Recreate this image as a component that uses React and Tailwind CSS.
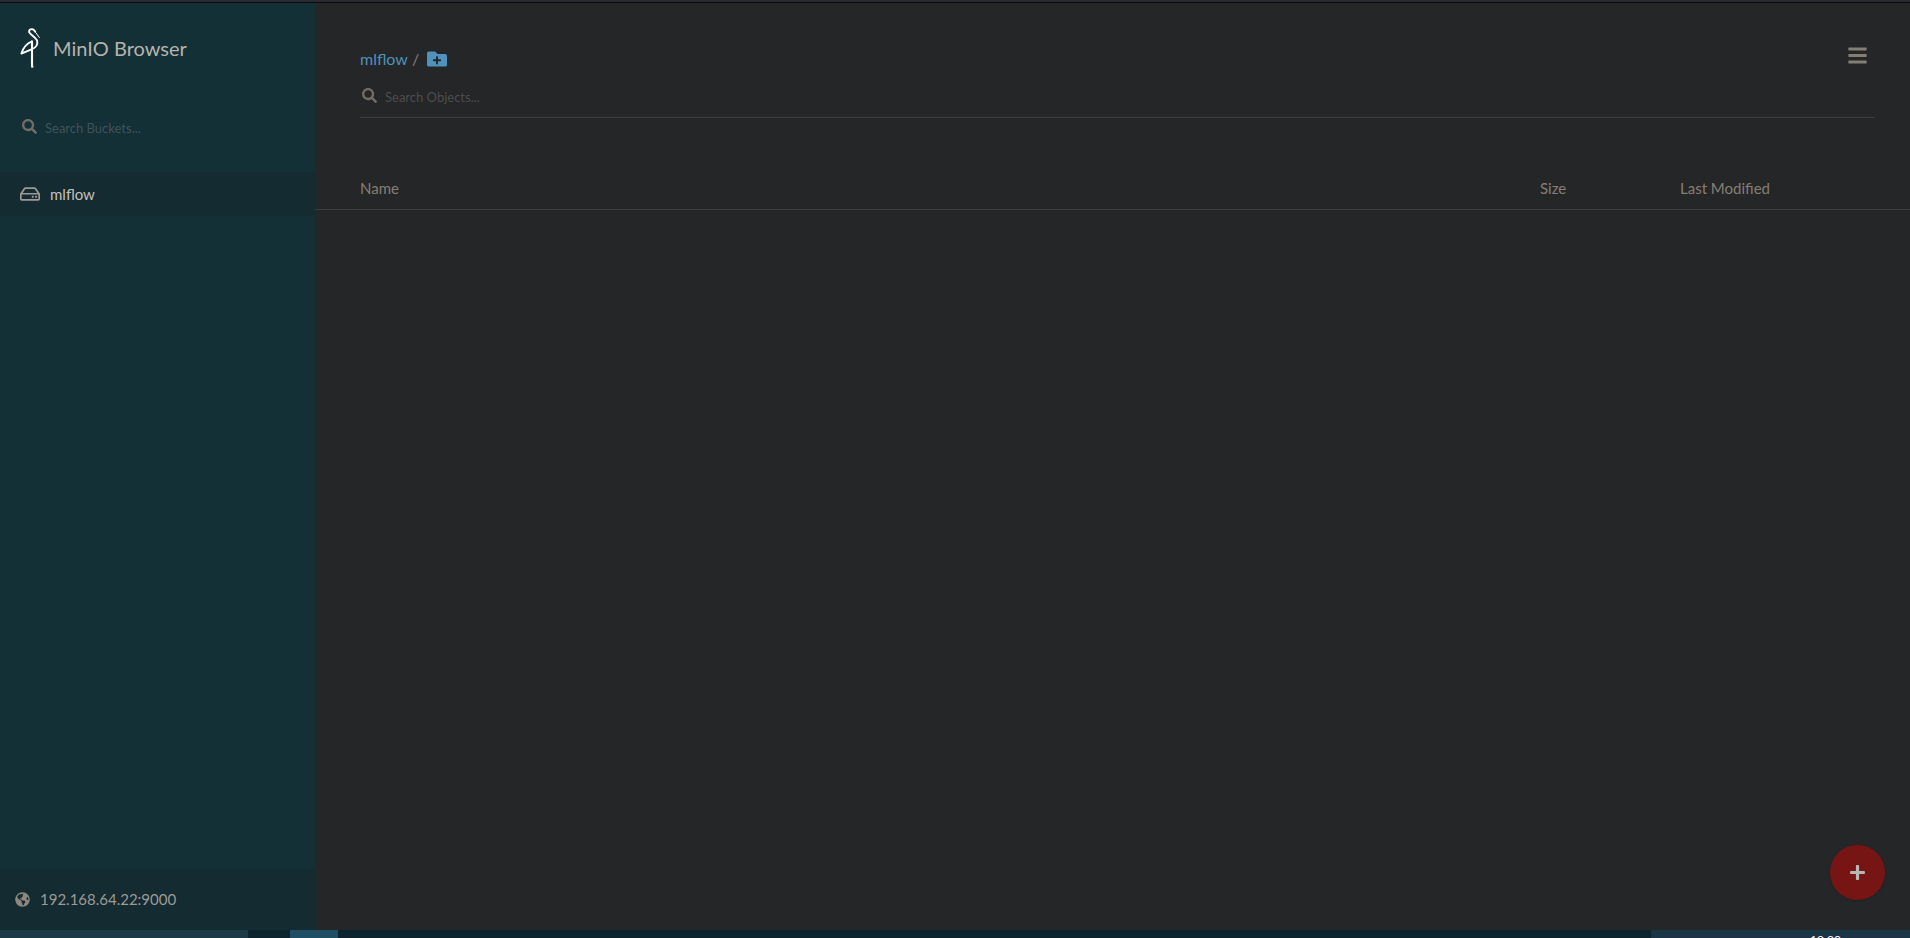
import React, { useState } from 'react';
import { FaBars, FaFolderPlus, FaGlobeAmericas, FaPlus, FaRegHdd, FaSearch } from 'react-icons/fa';

const buckets = ['mlflow'];

const Logo = () => (
  <svg viewBox="0 0 20 40" className="w-5 h-10" fill="none" stroke="#fff" aria-hidden="true">
    <path d="M12 13.4 C6.5 15.5 3 20.5 1.4 25.6 L12 21.2 C15.4 19.8 17.8 16.8 17.2 13 C16.4 9.6 10.4 6.6 9.2 4.4 C8.6 2.4 10.2 1 12 1.1 C14 1.2 14.8 2.8 15.4 4.2" strokeWidth="1.9" strokeLinejoin="round" />
    <path d="M12 12.4 L12 37.6 L12.6 39.6" strokeWidth="2.1" />
    <path d="M15 3.6 L19.6 9.8" strokeWidth="1" />
  </svg>
);

const SearchBox = ({ id, label, value, onChange }) => (
  <div className="flex items-center gap-2">
    <label htmlFor={id} aria-label={label} className="pb-1">
      <FaSearch className="size-[15px] text-[#716d66]" />
    </label>
    <input
      id={id}
      type="text"
      value={value}
      onChange={(e) => onChange(e.target.value)}
      placeholder={`${label}...`}
      className="flex-1 min-w-0 h-6 bg-transparent text-[13px] text-[#b0aca4] placeholder:text-[#b0aca4]/30 outline-none"
    />
  </div>
);

const Sidebar = () => {
  const [filter, setFilter] = useState('');
  const visible = buckets.filter(name => name.includes(filter));

  return (
    <aside className="w-[315px] shrink-0 flex flex-col bg-[#133037]">
      <div className="flex items-center gap-[13px] px-5 pt-[25px]">
        <Logo />
        <h1 className="text-xl text-[#b7b3ac]">MinIO Browser</h1>
      </div>
      <div className="px-[22px] pt-12 pb-8">
        <SearchBox id="bucket-search" label="Search Buckets" value={filter} onChange={setFilter} />
      </div>
      <ul>
        {visible.map(name => (
          <li key={name}>
            <a href={`#${name}`} className="flex items-center gap-2.5 h-11 px-5 bg-[#142b32] text-[15px] text-[#c4c1bb]">
              <FaRegHdd className="size-5 text-[#9c9a95]" />
              {name}
            </a>
          </li>
        ))}
      </ul>
      <div className="mt-auto flex items-center gap-2.5 h-[61px] px-[15px] bg-[#142b32] text-[15px] text-[#9c9a95]">
        <FaGlobeAmericas className="size-[15px] text-[#8f887d]" />
        192.168.64.22:9000
      </div>
    </aside>
  );
};

const ObjectList = () => (
  <table className="w-full table-fixed text-left text-[15px] text-[#857e73]">
    <thead>
      <tr className="h-[42px] border-b border-[#3b3d3e]">
        <th className="pl-[45px] font-normal">Name</th>
        <th className="w-[140px] font-normal">Size</th>
        <th className="w-[230px] font-normal">Last Modified</th>
      </tr>
    </thead>
    <tbody />
  </table>
);

const Taskbar = () => (
  <footer className="flex h-2 shrink-0 overflow-hidden bg-[#0b242e]">
    <div className="w-[248px] bg-[#1c3948]" />
    <div className="w-12 ml-[42px] bg-[#1e4f64]" />
    <div className="w-[259px] ml-auto bg-[#1a3545] pl-[159px] pt-1 text-xs leading-3 text-white">10:00</div>
  </footer>
);

const App = () => {
  const [query, setQuery] = useState('');

  return (
    <div className="flex flex-col h-screen bg-[#252628] font-[Lato,sans-serif]">
      <div className="h-[3px] shrink-0 bg-[#2b2a33] border-b border-[#0c0c0d]" />
      <div className="flex flex-1 min-h-0">
        <Sidebar />
        <main className="relative flex-1 min-w-0">
          <header className="pl-[45px] pr-[35px] pt-11">
            <div className="flex items-start justify-between">
              <nav className="flex items-center h-6 text-base text-[#857e73]">
                <a href="#mlflow" className="text-[#4e92bd]">mlflow</a>
                <span className="ml-1">/</span>
                <button type="button" aria-label="Create new path" className="ml-2">
                  <FaFolderPlus className="size-5 text-[#4e92bd]" />
                </button>
              </nav>
              <button type="button" aria-label="Menu" className="mr-[7px] -mt-0.5">
                <FaBars className="size-[21px] text-[#857e73]" />
              </button>
            </div>
            <div className="pl-0.5 pt-3.5 pb-2 border-b border-[#3b3d3e]">
              <SearchBox id="object-search" label="Search Objects" value={query} onChange={setQuery} />
            </div>
          </header>
          <div className="pt-[49px]">
            <ObjectList />
          </div>
          <button
            type="button"
            aria-label="Upload"
            className="absolute right-[25px] bottom-[30px] size-[55px] rounded-full bg-[#771514] flex items-center justify-center shadow"
          >
            <FaPlus className="size-[17px] text-[#b9b6b3]" />
          </button>
        </main>
      </div>
      <Taskbar />
    </div>
  );
};

export default App;
